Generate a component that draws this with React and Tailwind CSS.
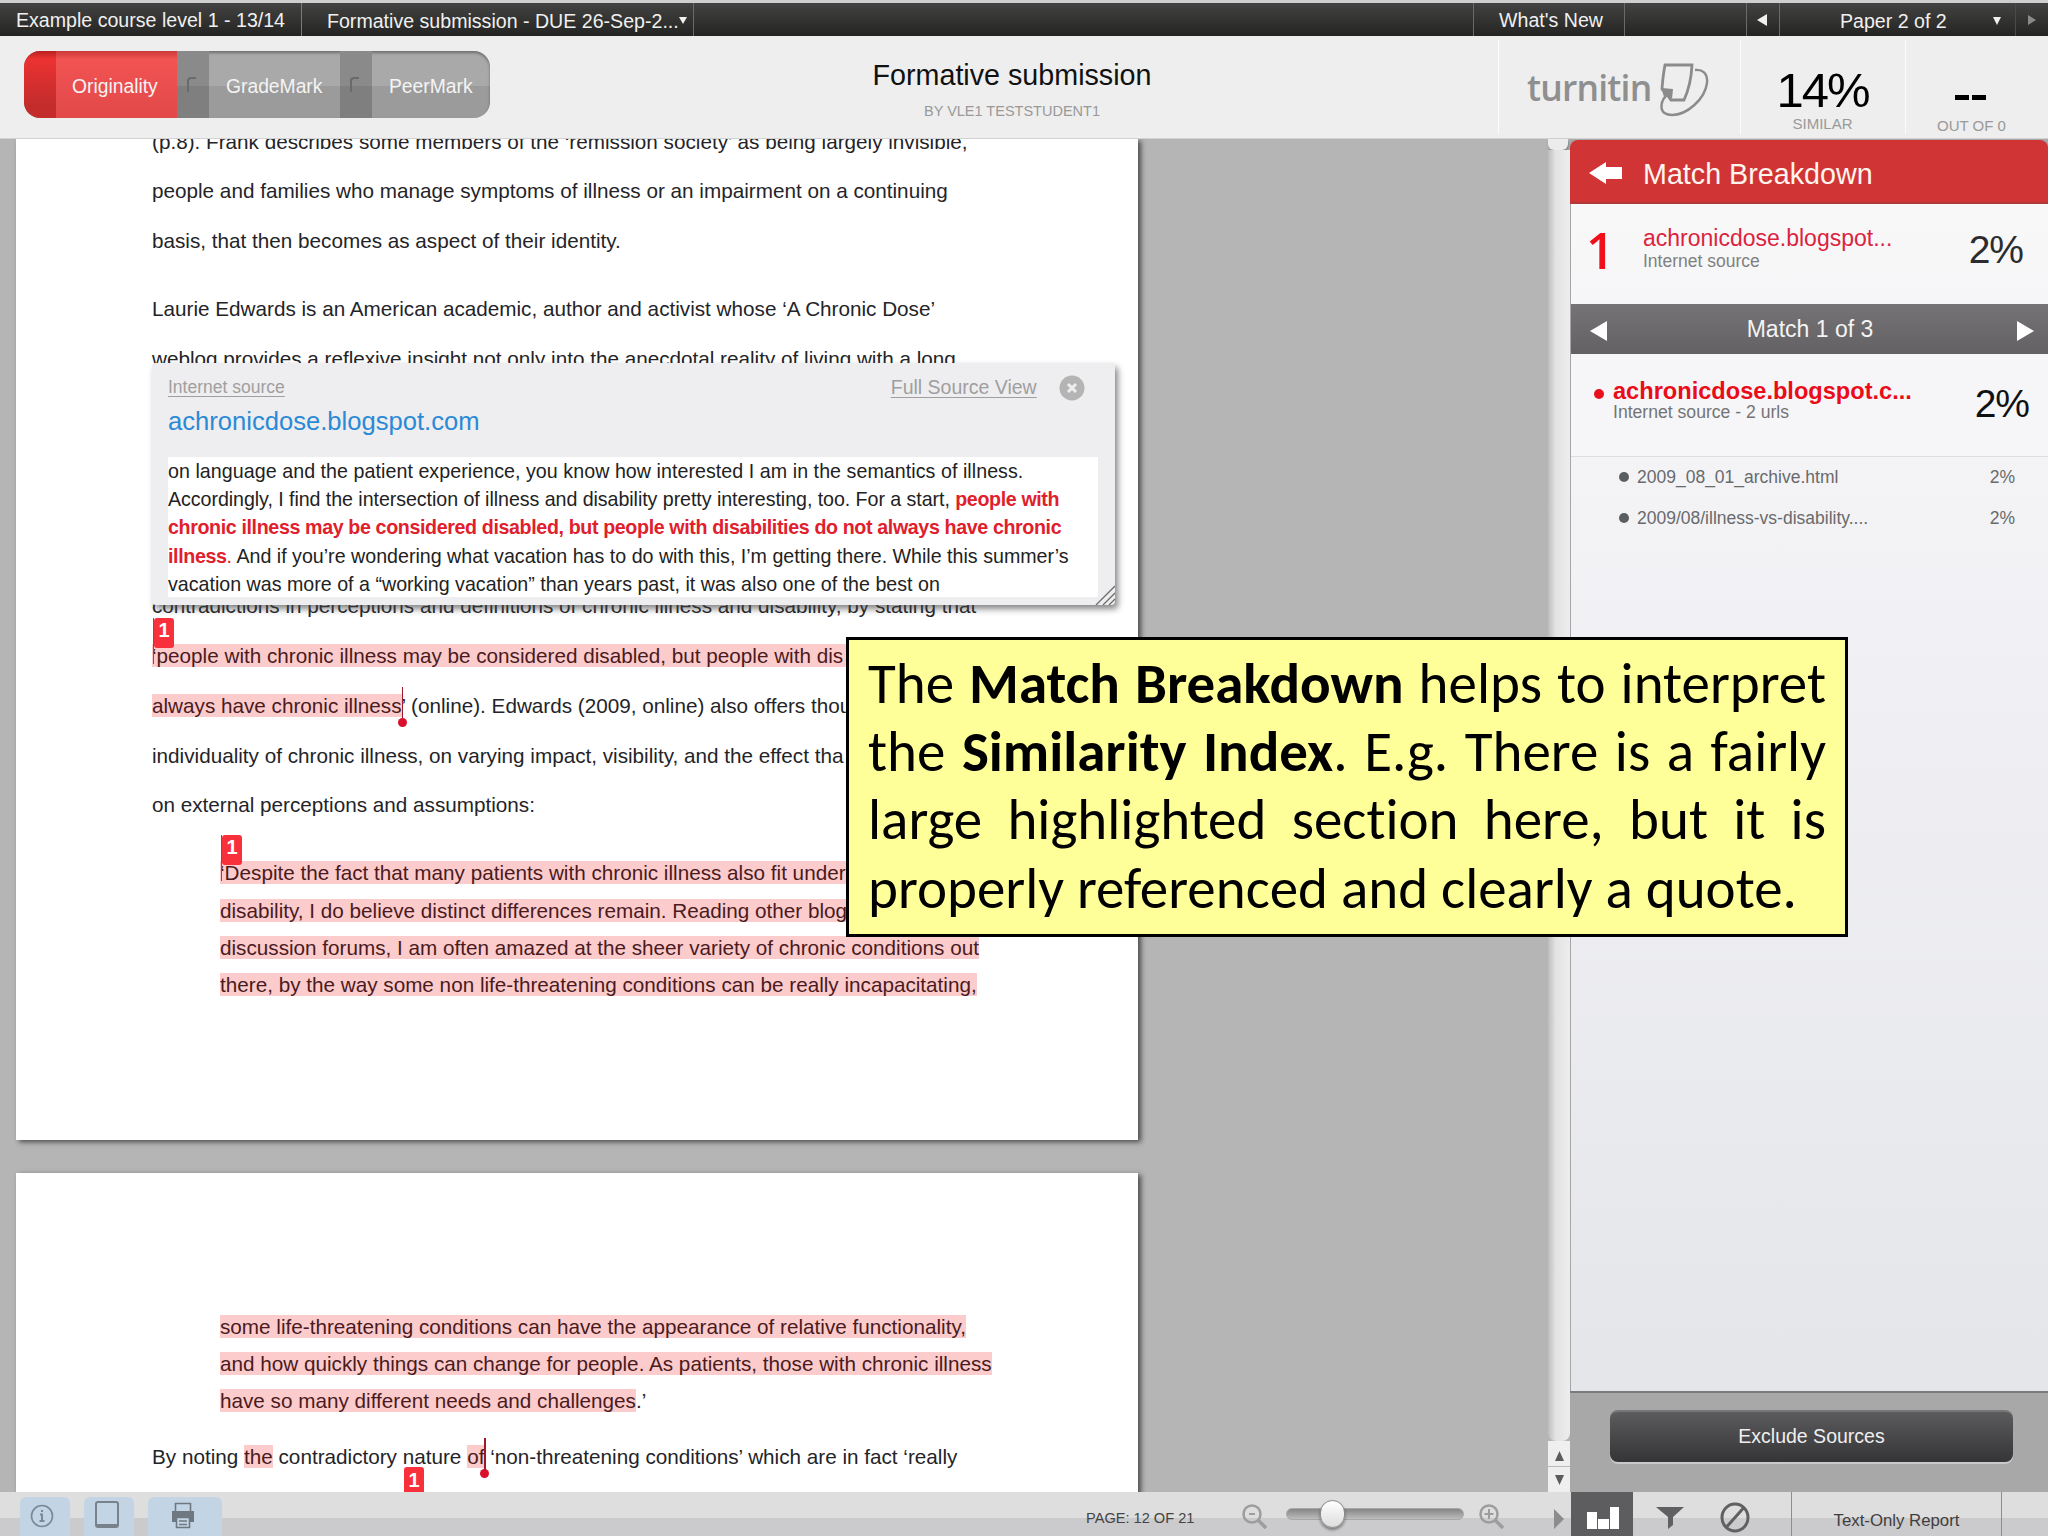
import React from 'react';
import clsx from 'clsx';

export default function App() {
  return (
    <div className="relative flex h-[1536px] w-[2048px] flex-col overflow-hidden bg-[#eeeeee] font-['Liberation_Sans',Arial,sans-serif] whitespace-nowrap">
      <TopBar />
      <Header />
      <main className="flex h-[1353px]">
        <DocumentViewer />
        <ScrollTrack />
        <MatchPanel />
      </main>
      <Footer />
      <SourcePopup />
      <Callout />
    </div>
  );
}

function TopBar() {
  return (
    <div className="flex h-9 shrink-0 border-t-[3px] border-[#cfcfcf] bg-linear-to-b from-[#434343] to-[#242422] text-[19.6px] leading-[34px] text-[#f0f0f0]">
      <div className="w-[302px] border-r border-[#7a7a7a] pl-4">Example course level 1 - 13/14</div>
      <div className="relative w-[392px] border-r border-[#6a6a6a] pt-px pl-[25px]">
        Formative submission - DUE 26-Sep-2...
        <Triangle className="absolute top-[14px] left-[377px] h-[7px] w-2" points="0,0 10,0 5,10" />
      </div>
      <div className="flex-1" />
      <div className="w-[152px] border-x border-[#6a6a6a] pl-1 text-center">What's New</div>
      <div className="w-[122px] border-r border-[#6a6a6a]" />
      <div className="flex w-[33px] items-center justify-center border-r border-[#6a6a6a] pr-[3px]">
        <Triangle className="h-3 w-[10px]" points="10,0 10,10 0,5" />
      </div>
      <div className="relative w-[236px] border-r border-[#4a4a4a] pt-px pl-[60px]">
        Paper 2 of 2
        <Triangle className="absolute top-[14px] left-[213px] h-2 w-2" points="0,0 10,0 5,10" />
      </div>
      <div className="flex w-8 items-center justify-center text-[#8a8a8a]">
        <Triangle className="h-[10px] w-2" points="0,0 10,5 0,10" />
      </div>
    </div>
  );
}

function Triangle({ className, points }) {
  return (
    <svg className={className} viewBox="0 0 10 10" preserveAspectRatio="none" fill="currentColor">
      <polygon points={points} />
    </svg>
  );
}

function Header() {
  return (
    <header className="flex h-[103px] shrink-0 border-b border-[#d2d2d2] bg-[#eeeeee]">
      <div className="w-[524px] pt-[15px] pl-6">
        <ModeTabs />
      </div>
      <div className="w-[974px] pt-[23px] pl-[2px] text-center">
        <h1 className="text-[28.7px] leading-8 text-[#111]">Formative submission</h1>
        <p className="mt-[10px] text-[14.5px] leading-5 text-[#999]">BY VLE1 TESTSTUDENT1</p>
      </div>
      <div className="my-1 flex w-[242px] border-l border-[#fbfbfb] pl-[28px]">
        <span className="pt-[15px] font-['Open_Sans',sans-serif] text-[35.5px] leading-[64px] font-semibold tracking-[-0.8px] text-[#8f8f8f]">turnitin</span>
        <svg className="mt-[21px] ml-[6px] h-[60px] w-[54px]" viewBox="0 0 54 60" fill="none" stroke="#8b8b8b">
          <path d="M8 4H35Q34 24 27 39H14L11 35L5 28Q6 14 8 4Z" strokeWidth="2.800" />
          <path d="M5 27L16 28L15 38L11 34L8 38L6 33Z" fill="#8b8b8b" stroke="none" />
          <path d="M38 9C45 8 51 12 50 22C48 38 30 54 15 54C3 54 1 44 10 33" strokeWidth="2.400" />
        </svg>
      </div>
      <div className="my-1 w-[165px] border-l border-[#fbfbfb] pt-[30px] pr-px text-center">
        <div className="text-[49px] leading-[40px] tracking-[-2px] text-black">14%</div>
        <div className="pt-[4px] text-[15px] leading-[20px] text-[#999]">SIMILAR</div>
      </div>
      <div className="my-1 w-[143px] border-l border-[#fbfbfb] text-center">
        <div className="mt-[55px] ml-[49px] flex gap-[3px]">
          <span className="h-[5px] w-[14px] bg-black" />
          <span className="h-[5px] w-[14px] bg-black" />
        </div>
        <div className="mt-[16px] pr-[11px] text-[15px] leading-[20px] text-[#999]">OUT OF 0</div>
      </div>
    </header>
  );
}

function ModeTabs() {
  return (
    <div className="flex h-[67px] w-[466px] overflow-hidden rounded-2xl bg-linear-to-b from-[#a9a9a9] from-52% to-[#9b9b9b] to-52% text-[19.3px] leading-[71px] text-[#f4f4f4] shadow-[inset_0_2px_3px_rgba(0,0,0,0.35)]">
      <div className="w-8 bg-linear-to-b from-[#b82222] via-[#ec3232] via-12% to-[#c42c2c] to-80%" />
      <div className="w-[121px] bg-linear-to-b from-[#c93a3a] via-[#f25353] via-12% to-[#e24848] pl-4">Originality</div>
      <TabDivider />
      <div className="w-[131px] pl-[17px]">GradeMark</div>
      <TabDivider />
      <div className="pl-[17px]">PeerMark</div>
    </div>
  );
}

function TabDivider() {
  return (
    <div className="flex w-8 items-center justify-center bg-linear-to-b from-[#8a8a8a] from-52% to-[#7f7f7f] to-52%">
      <span className="mr-1 h-[15px] w-[9px] rounded-tl border-t-2 border-l-2 border-[#6a6a6a]" />
    </div>
  );
}

function Line({ children, className }) {
  return <p className={clsx('h-[49.7px] leading-[49.7px]', className)}>{children}</p>;
}

function QuoteLine({ children }) {
  return <p className="ml-[68px] h-[37.3px] leading-[37.3px]">{children}</p>;
}

function Mark({ children, className }) {
  return <span className={clsx('bg-[#fccccc] text-[#4a1a1e]', className)}>{children}</span>;
}

// numbered flag at the start of a matched passage
function MatchFlag() {
  return (
    <span className="absolute -top-[26px] left-px h-[46px] border-l border-[#d8283a]">
      <span className="block h-[30px] w-5 rounded-[3px] bg-[#f8303c] text-center text-[20px] leading-[25px] font-bold text-white">1</span>
    </span>
  );
}

// stem and dot that close a matched passage
function MatchEnd() {
  return (
    <span className="relative inline-block w-0">
      <span className="absolute -top-[26px] left-0 h-[35px] w-[1.5px] bg-[#a01828]" />
      <span className="absolute top-[5px] -left-[4px] h-[9px] w-[9px] rounded-full bg-[#d8102c]" />
    </span>
  );
}

function DocumentViewer() {
  return (
    <section className="w-[1548px] overflow-hidden bg-[#b5b5b5] pl-4 text-[20.7px] text-[#242428]">
      <div className="flex h-[1001px] w-[1122px] flex-col bg-white pl-[136px] shadow-[3px_2px_5px_rgba(40,40,40,0.75)]">
        <Line className="-mt-[22.5px]">(p.8). Frank describes some members of the ‘remission society’ as being largely invisible,</Line>
        <Line>people and families who manage symptoms of illness or an impairment on a continuing</Line>
        <Line>basis, that then becomes as aspect of their identity.</Line>
        <Line className="mt-[18.5px]">Laurie Edwards is an American academic, author and activist whose ‘A Chronic Dose’</Line>
        <Line>weblog provides a reflexive insight not only into the anecdotal reality of living with a long</Line>
        <div className="h-[198px]" />
        <Line>contradictions in perceptions and definitions of chronic illness and disability, by stating that</Line>
        <Line>
          <span className="relative inline-block h-6 leading-6">
            <Mark className="pr-2">‘people with chronic illness may be considered disabled, but people with dis</Mark>
            <MatchFlag />
          </span>
        </Line>
        <Line>
          <Mark>always have chronic illness</Mark>
          <MatchEnd />
          ’ (online). Edwards (2009, online) also offers thou
        </Line>
        <Line>individuality of chronic illness, on varying impact, visibility, and the effect tha</Line>
        <Line className="mb-[24.5px]">on external perceptions and assumptions:</Line>
        <QuoteLine>
          <span className="relative inline-block h-6 leading-6">
            <Mark className="pr-2">‘Despite the fact that many patients with chronic illness also fit under</Mark>
            <MatchFlag />
          </span>
        </QuoteLine>
        <QuoteLine><Mark className="pr-2">disability, I do believe distinct differences remain. Reading other blog</Mark></QuoteLine>
        <QuoteLine><Mark>discussion forums, I am often amazed at the sheer variety of chronic conditions out</Mark></QuoteLine>
        <QuoteLine><Mark>there, by the way some non life-threatening conditions can be really incapacitating,</Mark></QuoteLine>
      </div>

      <div className="mt-[33px] h-[340px] w-[1122px] bg-white pt-[134.5px] pl-[136px] shadow-[3px_2px_5px_rgba(40,40,40,0.75)]">
        <QuoteLine><Mark>some life-threatening conditions can have the appearance of relative functionality,</Mark></QuoteLine>
        <QuoteLine><Mark>and how quickly things can change for people. As patients, those with chronic illness</Mark></QuoteLine>
        <QuoteLine><Mark>have so many different needs and challenges</Mark>.’</QuoteLine>
        <Line className="relative mt-[12.5px]">
          By noting <Mark>the</Mark> contradictory nature <Mark>of</Mark>
          <MatchEnd /> ‘non-threatening conditions’ which are in fact ‘really
          <span className="absolute top-[35px] left-[252px] h-[30px] w-5 rounded-[3px] bg-[#f8303c] text-center text-[20px] leading-[26px] font-bold text-white">1</span>
        </Line>
      </div>
    </section>
  );
}

function ScrollTrack() {
  return (
    <div className="flex w-[22px] flex-col bg-[#b5b5b5]">
      <div className="h-[11px] w-5 rounded-b-md bg-[#ececec] shadow-[1px_2px_3px_rgba(90,90,90,0.6)]" />
      <div className="flex-1 rounded-b-lg bg-linear-to-r from-[#bdbdbd] via-[#e4e3e4] via-35% to-[#ededed]" />
      <div className="flex h-[26px] items-center justify-center border-b border-[#bbb] bg-[#efefef] pt-1 text-[#5c5c5c]">
        <Triangle className="h-[10px] w-[9px]" points="5,0 10,10 0,10" />
      </div>
      <div className="flex h-[25px] items-center justify-center bg-[#efefef] text-[#5c5c5c]">
        <Triangle className="h-[10px] w-[9px]" points="0,0 10,0 5,10" />
      </div>
    </div>
  );
}

const urls = [
  { name: '2009_08_01_archive.html', score: '2%' },
  { name: '2009/08/illness-vs-disability....', score: '2%' },
];

function MatchPanel() {
  return (
    <aside className="flex w-[478px] flex-col bg-[#a9a8a9] pt-px">
      <div className="flex h-16 items-center rounded-t-lg border-b-2 border-[#b03a3a] bg-[#d13434] pl-[19px]">
        <svg className="mt-[3px] h-[22px] w-[33px]" viewBox="0 0 33 22" fill="#fff">
          <path d="M0 11L17 0V5H33V17H17V22Z" />
        </svg>
        <h2 className="mt-[5px] ml-[21px] text-[28.7px] leading-8 text-[#fff4ee]">Match Breakdown</h2>
      </div>

      <div className="flex h-[1187px] flex-col border-l border-[#a6a6a8] bg-linear-to-b from-[#f8f8f9] via-[#f0f0f4] via-40% to-[#e5e6ea]">
        <div className="flex h-[100px] pt-[21px]">
          <div className="w-[72px] pl-[15px] font-['Open_Sans',sans-serif] text-[50px] leading-[50px] font-semibold text-[#f0101c]">1</div>
          <div className="flex-1">
            <div className="text-[23px] leading-[26px] text-[#dc2440]">achronicdose.blogspot...</div>
            <div className="text-[17.5px] leading-5 text-[#808080]">Internet source</div>
          </div>
          <div className="pt-[5px] pr-[25px] text-[39px] leading-10 tracking-[-1px] text-[#2c2c2e]">2%</div>
        </div>

        <div className="flex h-[50px] items-center justify-between bg-linear-to-b from-[#757375] to-[#636163] pr-[14px] pl-[19px] text-white">
          <Triangle className="mt-1 h-5 w-[17px]" points="10,0 10,10 0,5" />
          <span className="pr-1 text-[23px] text-[#f4f4f4]">Match 1 of 3</span>
          <Triangle className="mt-1 h-5 w-[17px]" points="0,0 10,5 0,10" />
        </div>

        <div className="flex h-[103px] border-b border-[#dcdde0] bg-[#f6f6f8] pt-[24px]">
          <span className="mt-[11px] ml-[23px] h-[10px] w-[10px] rounded-full bg-[#e8101c]" />
          <div className="ml-[9px] flex-1">
            <div className="text-[23.6px] leading-[26px] font-bold text-[#ea0c18]">achronicdose.blogspot.c...</div>
            <div className="text-[17.6px] leading-4 text-[#747474]">Internet source - 2 urls</div>
          </div>
          <div className="pt-[6px] pr-[19px] text-[39px] leading-10 tracking-[-1px] text-[#111]">2%</div>
        </div>

        {urls.map((url) => (
          <div key={url.name} className="flex h-[41.5px] items-center pr-[33px] pb-[2px] pl-[48px] text-[17.5px] text-[#686a6c]">
            <span className="h-[10px] w-[10px] rounded-full bg-[#5a5e62]" />
            <span className="ml-[8px] flex-1">{url.name}</span>
            <span>{url.score}</span>
          </div>
        ))}
      </div>

      <div className="flex-1 border-t-2 border-[#7b7b7c] bg-[#a9a8a9] pt-[17px] pl-10">
        <button className="block h-[52px] w-[403px] rounded-lg border-t-2 border-[#777] bg-linear-to-b from-[#5c5c5e] to-[#353436] text-[19.5px] text-[#efefef] shadow-[0_2px_0_#c9c9c9]">
          Exclude Sources
        </button>
      </div>
    </aside>
  );
}

function ZoomGlass({ plus }) {
  return (
    <svg className="h-[26px] w-[26px]" viewBox="0 0 26 26" fill="none" stroke="#9d9d9d">
      <circle cx="10" cy="11" r="8.500" strokeWidth="2.500" />
      <path d="M16 17L24 25" strokeWidth="3.500" />
      <path d={plus ? 'M5.500 11H14.500M10 6V16' : 'M7 11H13'} strokeWidth="2" />
    </svg>
  );
}

function Footer() {
  return (
    <footer className="flex h-11 shrink-0 bg-linear-to-b from-[#dedede] from-60% to-[#cbcacc] to-60% text-[#6b7a88]">
      <div className="mt-[5px] ml-5 flex w-[50px] justify-center rounded-t-md bg-[#c3d5e5] pt-[7px] pr-[6px]">
        <svg className="h-6 w-6" viewBox="0 0 24 24" fill="none" stroke="#7b8894" strokeWidth="1.600">
          <circle cx="12" cy="12" r="10.500" />
          <path d="M12 6V8M10 10.500H12V17M9.500 17H14.500" strokeWidth="2" />
        </svg>
      </div>
      <div className="mt-[5px] ml-[14px] flex w-[50px] justify-center rounded-t-md bg-[#c3d5e5] pt-[4px] pr-[5px]">
        <span className="h-[27px] w-6 rounded-[3px] border-2 border-b-4 border-[#77828c]" />
      </div>
      <div className="mt-[5px] ml-[14px] flex w-[74px] justify-center rounded-t-md bg-[#c3d5e5] pt-[5px] pr-[4px]">
        <svg className="h-[27px] w-6" viewBox="0 0 24 27" fill="none" stroke="#6f7880" strokeWidth="1.600">
          <path d="M4.500 9V1.500H19.500V9" />
          <path d="M1 9H23V20H19V15H5V20H1Z" fill="#6f7880" stroke="none" />
          <path d="M5.500 15.500H18.500V25.500H5.500ZM8 19H16M8 22.500H16" />
        </svg>
      </div>

      <div className="ml-[864px] pt-[16px] text-[14.6px] leading-5 text-[#444]">PAGE: 12 OF 21</div>
      <div className="ml-[48px] pt-[11px]"><ZoomGlass /></div>
      <div className="relative mt-4 ml-[18px] h-3 w-[178px] rounded-full border border-[#a8a8a8] bg-linear-to-b from-[#868686] to-[#bdbdbd]">
        <span className="absolute -top-[9px] left-[33px] h-[28px] w-[25px] rounded-full border border-[#8a8a8a] bg-linear-to-b from-white to-[#dcdcdc] shadow-[0_2px_3px_rgba(0,0,0,0.4)]" />
      </div>
      <div className="ml-[15px] pt-[11px]"><ZoomGlass plus /></div>
      <div className="flex-1" />
      <div className="pt-[17px] pr-[7px] text-[#8c8c8c]">
        <Triangle className="h-5 w-[10px]" points="0,0 10,5 0,10" />
      </div>

      <div className="flex w-[477px] text-[#606062]">
        <div className="flex w-[62px] items-end gap-px bg-[#5d5c5e] pb-[7px] pl-4">
          <span className="h-[17px] w-[10px] bg-white" />
          <span className="h-[10px] w-[11px] bg-white" />
          <span className="h-[22px] w-[9px] bg-white" />
        </div>
        <svg className="mt-[15px] ml-[23px] h-[22px] w-[28px]" viewBox="0 0 28 22" fill="currentColor">
          <path d="M0 0H28L17 10V18L12 22V10Z" />
        </svg>
        <svg className="mt-[10px] ml-[36px] h-[31px] w-[30px]" viewBox="0 0 30 31" fill="none" stroke="currentColor" strokeWidth="3">
          <ellipse cx="15" cy="15.500" rx="13" ry="13.500" />
          <path d="M23.500 6L6.500 25" />
        </svg>
        <div className="ml-[41px] w-[211px] border-x border-[#8d8d8d] pt-[18.5px] text-center text-[16.8px] leading-[20px] text-[#3f3f41]">
          Text-Only Report
        </div>
      </div>
    </footer>
  );
}

function SourcePopup() {
  return (
    <div className="absolute top-[363px] left-[152px] h-[242px] w-[963px] rounded bg-[#eeedef] pl-4 shadow-[3px_4px_6px_rgba(70,70,70,0.65)]">
      <div className="flex h-[43px] items-start pt-[12px] text-[#9f9f9f]">
        <span className="text-[17.5px] leading-6 underline underline-offset-[3px]">Internet source</span>
        <span className="ml-[606px] text-[19.5px] leading-6 underline underline-offset-[3px]">Full Source View</span>
        <svg className="ml-[22px] h-[26px] w-[26px]" viewBox="0 0 26 26">
          <circle cx="13" cy="13" r="12.500" fill="#b4b4b4" />
          <path d="M9 9L17 17M17 9L9 17" stroke="#eee" strokeWidth="3" />
        </svg>
      </div>
      <h3 className="h-[51px] text-[25.6px] leading-[30px] text-[#2a8ad6]">achronicdose.blogspot.com</h3>
      <div className="h-[140px] w-[930px] bg-white text-[19.65px] leading-[28.2px] text-[#222]">
        <p className="tracking-[0.05px]">on language and the patient experience, you know how interested I am in the semantics of illness.</p>
        <p className="tracking-[-0.06px]">Accordingly, I find the intersection of illness and disability pretty interesting, too. For a start, <Hit>people with</Hit></p>
        <p><Hit>chronic illness may be considered disabled, but people with disabilities do not always have chronic</Hit></p>
        <p><Hit>illness</Hit><span className="text-[#e0202c]">.</span> And if you’re wondering what vacation has to do with this, I’m getting there. While this summer’s</p>
        <p>vacation was more of a “working vacation” than years past, it was also one of the best on</p>
      </div>
      <svg className="absolute right-0 bottom-0 h-5 w-5" viewBox="0 0 20 20" stroke="#6c6c6c" strokeWidth="1.300">
        <path d="M1 20L20 1M8 20L20 8M14 20L20 14" />
      </svg>
    </div>
  );
}

function Hit({ children }) {
  return <b className="tracking-[-0.37px] text-[#e0202c]">{children}</b>;
}

function Callout() {
  return (
    <div className="absolute top-[637px] left-[846px] h-[300px] w-[1002px] border-[3px] border-black bg-[#ffff99] px-[19px] pt-[10px] font-['Carlito','Lato',sans-serif] text-[57px] leading-[68.2px] text-black [font-variant-ligatures:none]">
      <p className="[text-align-last:justify]">The <b>Match Breakdown</b> helps to interpret</p>
      <p className="[text-align-last:justify]">the <b>Similarity Index</b>. E.g. There is a fairly</p>
      <p className="[text-align-last:justify]">large highlighted section here, but it is</p>
      <p>properly referenced and clearly a quote.</p>
    </div>
  );
}
